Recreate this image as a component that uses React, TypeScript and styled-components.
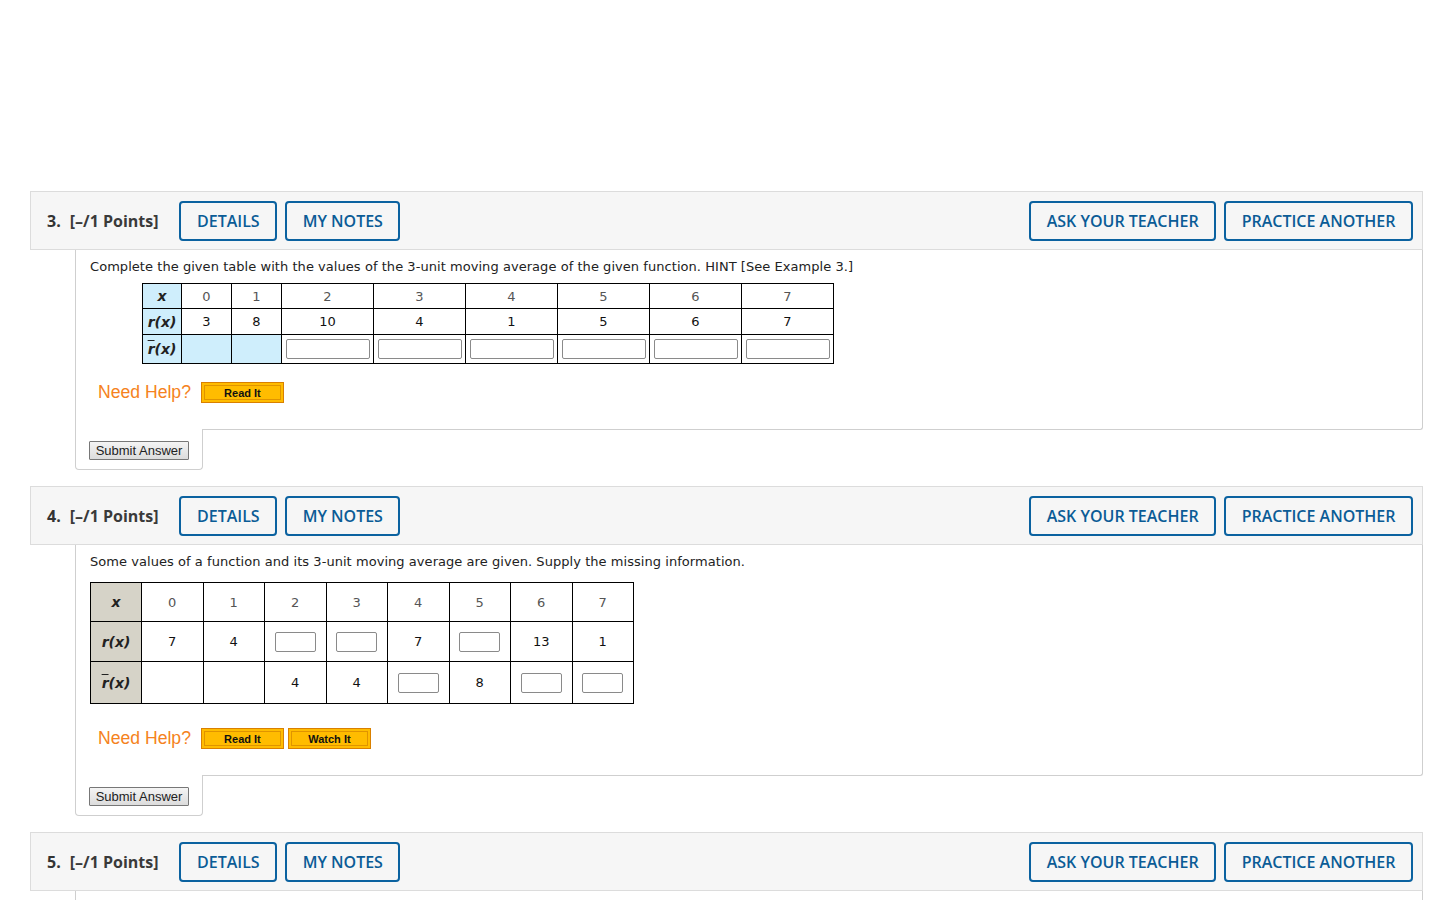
import styled, { createGlobalStyle } from "styled-components";

const GlobalStyle = createGlobalStyle`
  html, body {
    margin: 0;
    padding: 0;
    background: #fff;
  }
  body {
    font-family: "Open Sans", "DejaVu Sans", sans-serif;
  }
`;

const Page = styled.div`
  width: 1440px;
  height: 900px;
  overflow: hidden;
  padding: 191px 17px 0 30px;
  box-sizing: border-box;
`;

const Question = styled.section`
  margin-bottom: 16px;
`;

const Header = styled.div`
  display: flex;
  align-items: center;
  height: 59px;
  box-sizing: border-box;
  border: 1px solid #dcdcdc;
  background: #f6f6f6;
  padding: 0 9px 0 16px;
`;

const QNum = styled.span`
  font-size: 16px;
  font-weight: 700;
  color: #333;
  margin-right: 9px;
`;

const Points = styled.span`
  font-size: 16px;
  font-weight: 700;
  color: #3a3a3a;
  margin-right: 21px;
`;

const Spacer = styled.div`
  flex: 1;
`;

const HeadBtn = styled.button`
  height: 40px;
  box-sizing: border-box;
  padding: 0 15.5px;
  margin-left: ${(p: { $first?: boolean }) => (p.$first ? "0" : "8px")};
  border: 2px solid #0b62a0;
  border-radius: 4px;
  background: transparent;
  color: #0b5c96;
  font-family: "Open Sans", sans-serif;
  font-size: 16px;
  font-weight: 600;
  cursor: pointer;
`;

const Content = styled.div`
  margin-left: 45px;
  border: 1px solid #cfcfcf;
  border-top: none;
  border-bottom-right-radius: 3px;
  padding: 8px 14px 0 14px;
  font-family: "DejaVu Sans", Verdana, sans-serif;
  font-size: 13px;
  color: #222;
  height: ${(p: { $h: number }) => p.$h}px;
  box-sizing: border-box;
`;

const Prompt = styled.p`
  margin: 0;
  line-height: 17px;
  font-size: 13px;
  letter-spacing: 0.05px;
`;

const Grid = styled.table<{ $indent: number; $top: number }>`
  border-collapse: collapse;
  margin-left: ${(p) => p.$indent}px;
  margin-top: ${(p) => p.$top}px;
  font-family: "DejaVu Sans", Verdana, sans-serif;
  font-size: 13px;
  td {
    border: 1px solid #000;
    text-align: center;
    padding: 0;
    color: #111;
  }
`;

const Row = styled.tr<{ $h: number }>`
  height: ${(p) => p.$h}px;
`;

const Label = styled.td<{ $bg: string; $w: number }>`
  && {
    background: ${(p) => p.$bg};
    width: ${(p) => p.$w}px;
    font-size: 14px;
    font-weight: 700;
    font-style: italic;
    color: #222;
  }
`;

const HeadCell = styled.td<{ $w?: number }>`
  && {
    width: ${(p) => (p.$w ? `${p.$w}px` : "auto")};
    color: #555;
  }
`;

const Cell = styled.td<{ $blue?: boolean }>`
  && {
    background: ${(p) => (p.$blue ? "#cfeefc" : "transparent")};
  }
`;

const Bar = styled.span`
  text-decoration: overline;
`;

const Box = styled.input<{ $w: number }>`
  width: ${(p) => p.$w}px;
  height: 20px;
  box-sizing: border-box;
  border: 1px solid #8a8a8a;
  border-radius: 2px;
  margin: 0;
  padding: 0;
  vertical-align: middle;
  background: #fff;
`;

const HelpRow = styled.div<{ $top: number }>`
  display: flex;
  align-items: center;
  margin-top: ${(p) => p.$top}px;
  padding-left: 8px;
`;

const HelpText = styled.span`
  font-family: "Liberation Sans", Arial, sans-serif;
  font-size: 17.6px;
  color: #f58220;
  margin-right: 10px;
`;

const HelpBtn = styled.button`
  width: 83px;
  height: 21px;
  box-sizing: border-box;
  margin-right: 4px;
  padding: 0;
  border: 1px solid #d98000;
  background: #ffbc00;
  box-shadow: inset 0 0 0 2px #ffbc00, inset 0 0 0 3px #e09400;
  font-family: "Liberation Sans", Arial, sans-serif;
  font-size: 11px;
  font-weight: 700;
  color: #111;
  cursor: pointer;
`;

const SubmitTab = styled.div`
  margin-left: 45px;
  margin-top: -1px;
  width: 128px;
  height: 41px;
  box-sizing: border-box;
  border: 1px solid #cfcfcf;
  border-top: none;
  border-radius: 0 0 4px 4px;
  background: #fff;
  padding: 12px 0 0 13px;
`;

const SubmitBtn = styled.button`
  display: block;
  width: 100px;
  height: 19px;
  box-sizing: border-box;
  padding: 0;
  border: 1px solid #777;
  border-radius: 1px;
  background: linear-gradient(#f4f4f4, #dcdcdc);
  font-family: "Liberation Sans", Arial, sans-serif;
  font-size: 13px;
  color: #222;
`;

function QHeader({ n }: { n: number }) {
  return (
    <Header>
      <QNum>{n}.</QNum>
      <Points>[–/1 Points]</Points>
      <HeadBtn $first>DETAILS</HeadBtn>
      <HeadBtn>MY NOTES</HeadBtn>
      <Spacer />
      <HeadBtn $first>ASK YOUR TEACHER</HeadBtn>
      <HeadBtn>PRACTICE ANOTHER</HeadBtn>
    </Header>
  );
}

const xs = [0, 1, 2, 3, 4, 5, 6, 7];

function TableOne() {
  const r = [3, 8, 10, 4, 1, 5, 6, 7];
  return (
    <Grid $indent={52} $top={8}>
      <tbody>
        <Row $h={25}>
          <Label $bg="#cfeefc" $w={38}>x</Label>
          {xs.map((x) => (
            <HeadCell key={x} $w={x < 2 ? 49 : 91}>
              {x}
            </HeadCell>
          ))}
        </Row>
        <Row $h={26}>
          <Label $bg="#cfeefc" $w={38}>r(x)</Label>
          {r.map((v, i) => (
            <Cell key={i}>{v}</Cell>
          ))}
        </Row>
        <Row $h={29}>
          <Label $bg="#cfeefc" $w={38}>
            <Bar>r</Bar>(x)
          </Label>
          {xs.map((x) =>
            x < 2 ? (
              <Cell key={x} $blue />
            ) : (
              <Cell key={x}>
                <Box $w={84} />
              </Cell>
            )
          )}
        </Row>
      </tbody>
    </Grid>
  );
}

function TableTwo() {
  const r: (number | null)[] = [7, 4, null, null, 7, null, 13, 1];
  const avg: (number | null | "")[] = ["", "", 4, 4, null, 8, null, null];
  return (
    <Grid $indent={0} $top={12}>
      <tbody>
        <Row $h={39}>
          <Label $bg="#d6d3c8" $w={50}>x</Label>
          {xs.map((x) => (
            <HeadCell key={x} $w={60.5}>
              {x}
            </HeadCell>
          ))}
        </Row>
        <Row $h={40}>
          <Label $bg="#d6d3c8" $w={50}>r(x)</Label>
          {r.map((v, i) => (
            <Cell key={i}>{v === null ? <Box $w={41} /> : v}</Cell>
          ))}
        </Row>
        <Row $h={42}>
          <Label $bg="#d6d3c8" $w={50}>
            <Bar>r</Bar>(x)
          </Label>
          {avg.map((v, i) => (
            <Cell key={i}>{v === null ? <Box $w={41} /> : v}</Cell>
          ))}
        </Row>
      </tbody>
    </Grid>
  );
}

export default function App() {
  return (
    <>
      <GlobalStyle />
      <Page>
        <Question>
          <QHeader n={3} />
          <Content $h={180}>
            <Prompt>
              Complete the given table with the values of the 3-unit moving average of the given
              function. HINT [See Example 3.]
            </Prompt>
            <TableOne />
            <HelpRow $top={18}>
              <HelpText>Need Help?</HelpText>
              <HelpBtn>Read It</HelpBtn>
            </HelpRow>
          </Content>
          <SubmitTab>
            <SubmitBtn>Submit Answer</SubmitBtn>
          </SubmitTab>
        </Question>
        <Question>
          <QHeader n={4} />
          <Content $h={231}>
            <Prompt>
              Some values of a function and its 3-unit moving average are given. Supply the missing
              information.
            </Prompt>
            <TableTwo />
            <HelpRow $top={24}>
              <HelpText>Need Help?</HelpText>
              <HelpBtn>Read It</HelpBtn>
              <HelpBtn>Watch It</HelpBtn>
            </HelpRow>
          </Content>
          <SubmitTab>
            <SubmitBtn>Submit Answer</SubmitBtn>
          </SubmitTab>
        </Question>
        <Question>
          <QHeader n={5} />
          <Content $h={60} />
        </Question>
      </Page>
    </>
  );
}
